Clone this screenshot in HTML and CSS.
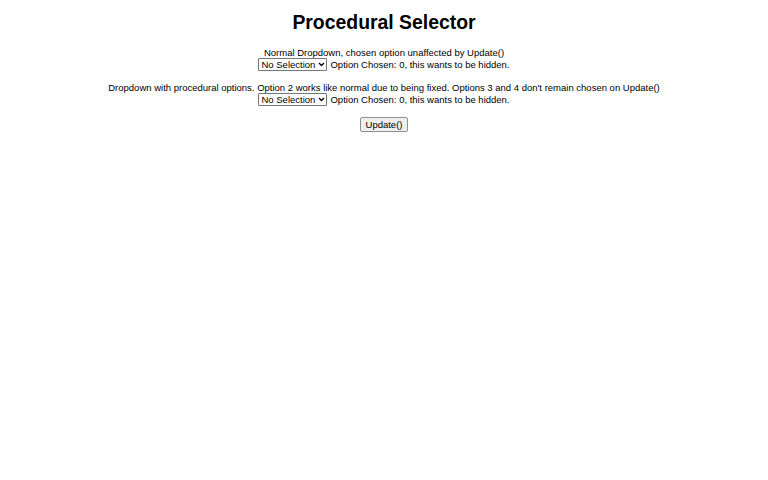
FILE: index.html
```html
<!DOCTYPE html>
<html lang="en">
<head>
    <meta charset="UTF-8">
    <meta name="viewport" content="width=device-width, initial-scale=1.0">
    <title>Procedural Selector</title>
    <link rel="stylesheet" href="styles.css">
</head>
<body>
    <h1>Procedural Selector</h1>

    <div class="block">
        <p class="label">Normal Dropdown, chosen option unaffected by Update()</p>
        <div class="row">
            <span class="select-wrap">
                <select class="picker">
                    <option>No Selection</option>
                    <option>Option 1</option>
                    <option>Option 2</option>
                    <option>Option 3</option>
                    <option>Option 4</option>
                </select>
                <svg class="chevron" width="7" height="5" viewBox="0 0 7 5"><path d="M1 1 L3.5 3.5 L6 1" fill="none" stroke="#000" stroke-width="1.3"/></svg>
            </span>
            <span>Option Chosen: 0, this wants to be hidden.</span>
        </div>
    </div>

    <div class="block">
        <p class="label">Dropdown with procedural options. Option 2 works like normal due to being fixed. Options 3 and 4 don't remain chosen on Update()</p>
        <div class="row">
            <span class="select-wrap">
                <select class="picker">
                    <option>No Selection</option>
                    <option>Option 2</option>
                </select>
                <svg class="chevron" width="7" height="5" viewBox="0 0 7 5"><path d="M1 1 L3.5 3.5 L6 1" fill="none" stroke="#000" stroke-width="1.3"/></svg>
            </span>
            <span>Option Chosen: 0, this wants to be hidden.</span>
        </div>
    </div>

    <div class="actions">
        <button class="update">Update()</button>
    </div>
</body>
</html>
```

FILE: styles.css
```css
body {
    font-family: "Liberation Sans", Arial, sans-serif;
    font-size: 9.5px;
    margin: 8px;
    color: #000;
    background-color: #fff;
    text-align: center;
}
h1 {
    font-size: 19.4px;
    margin: 3px 0 13px;
}
.block {
    margin-bottom: 11px;
}
.label {
    margin: 0;
    line-height: 12px;
}
.row {
    margin-top: -1px;
    line-height: 12px;
    display: flex;
    justify-content: center;
    align-items: center;
    gap: 3px;
}
.select-wrap {
    position: relative;
    display: inline-block;
}
.picker {
    appearance: none;
    -webkit-appearance: none;
    display: block;
    font-family: inherit;
    font-size: 9.5px;
    height: 13px;
    width: 69px;
    padding: 0 0 0 2px;
    border: 1px solid #767676;
    border-radius: 1px;
    background: #fff;
    color: #000;
    text-align: left;
}
.chevron {
    position: absolute;
    right: 2px;
    top: 4px;
    pointer-events: none;
}
.actions {
    margin-top: 1px;
}
.update {
    font-family: inherit;
    font-size: 9.5px;
    height: 15px;
    width: 48px;
    padding: 0;
    border: 1px solid #8f8f8f;
    border-radius: 2px;
    background: #efefef;
    color: #000;
}
```
